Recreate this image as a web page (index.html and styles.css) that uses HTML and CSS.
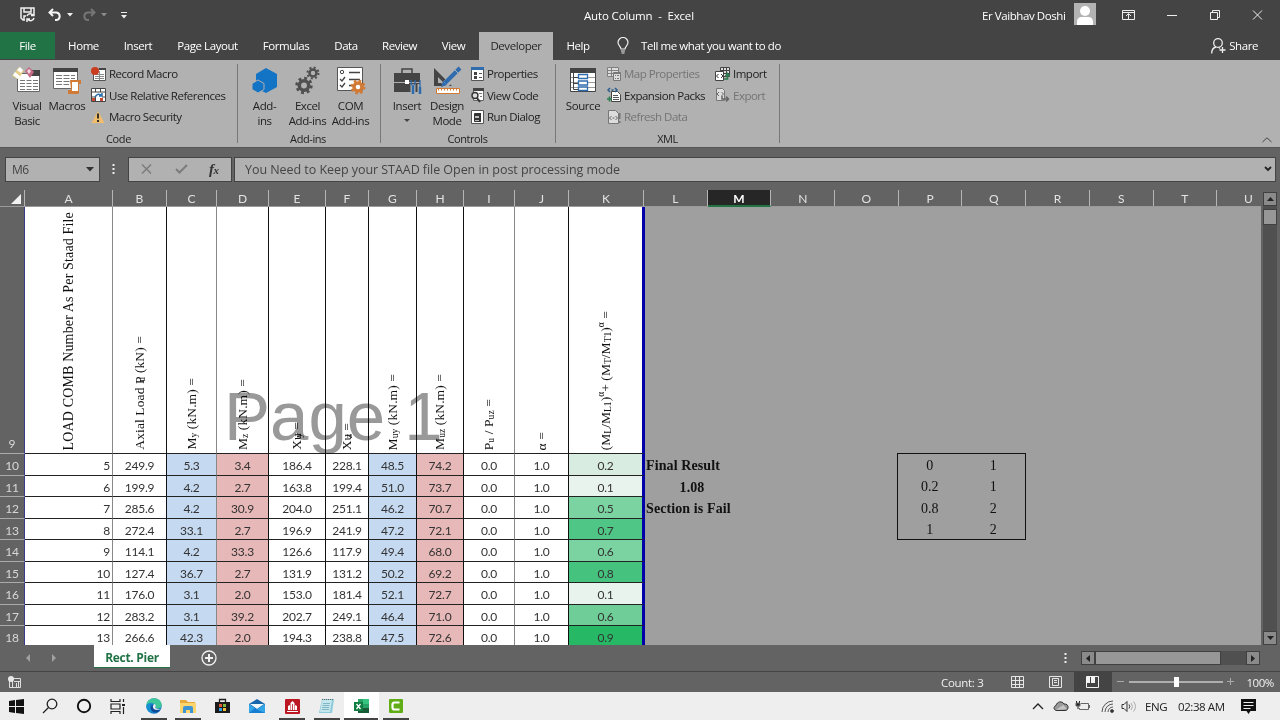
FILE: index.html
```html
<!DOCTYPE html>
<html lang="en">
<head>
  <meta charset="UTF-8">
  <meta name="viewport" content="width=device-width, initial-scale=1.0">
  <title>Auto Column - Excel</title>

  <link rel="stylesheet" href="styles.css">
</head>
<body>
  <div class="window">
    <header class="titlebar">
      <div class="quick">
        <svg class="q-save" width="16" height="16" viewBox="0 0 16 16" fill="none" stroke="#f0f0f0" stroke-width="1.500"><path d="M5 13H3L1 11V1h13v4M4 1v4h7V1M4 13V9h2"/><path d="M7 9a3.500 3.500 0 0 1 6-1M14 5v3.500h-3M14 11a3.500 3.500 0 0 1-6 1.500M7 15v-3h3"/></svg>
        <svg class="q-undo" width="14" height="14" viewBox="0 0 14 14" fill="none" stroke="#f4f4f4" stroke-width="2"><path d="M5 1L1.500 4.500 5 8M2 4.500h6.500a3.800 3.800 0 0 1 0 7.500H7"/></svg>
        <svg class="q-caret" width="6" height="4"><path d="M0 0h6L3 3.500z" fill="#eee"/></svg>
        <svg class="q-redo" width="14" height="14" viewBox="0 0 14 14" fill="none" stroke="#757575" stroke-width="2"><path d="M9 1l3.500 3.500L9 8M12 4.500H5.500a3.800 3.800 0 0 0 0 7.500H7"/></svg>
        <svg class="q-caret" width="6" height="4"><path d="M0 0h6L3 3.500z" fill="#8a8a8a"/></svg>
        <svg class="q-more" width="6" height="7"><path d="M0 .5h6" stroke="#eee"/><path d="M0 3h6L3 6.500z" fill="#eee"/></svg>
      </div>
      <div class="doc-title">Auto Column&nbsp; -&nbsp; Excel</div>
      <div class="user">Er Vaibhav Doshi</div>
      <svg class="avatar" width="22" height="22" viewBox="0 0 22 22"><path fill="#b3b3b3" d="M0 0h22v22H0z"/><circle cx="11" cy="8" r="5" fill="#fff"/><path d="M3 22v-3q0-5 5-5h6q5 0 5 5v3z" fill="#fff"/></svg>
      <svg class="win-btns" width="145" height="14" viewBox="0 0 145 14" fill="none" stroke="#eee"><path d="M.5 2.500h12v9H.5zM.5 4.500h12M6.500 11V6M4 8l2.500-2.500L9 8M45 7.500h10M88.500 4.500h7v7h-7zM90.500 4V2.500h7v7H96M131 2.500l9 9M140 2.500l-9 9"/></svg>
    </header>

    <nav class="tabs">
      <div class="tab file">File</div>
      <div class="tab">Home</div>
      <div class="tab">Insert</div>
      <div class="tab">Page Layout</div>
      <div class="tab">Formulas</div>
      <div class="tab">Data</div>
      <div class="tab">Review</div>
      <div class="tab">View</div>
      <div class="tab active">Developer</div>
      <div class="tab">Help</div>
      <div class="tell">
        <svg width="12" height="17" viewBox="0 0 12 17" fill="none" stroke="#eee" stroke-width="1.200"><path d="M4 12c0-2.500-3-3.500-3-6.500a5 5 0 0 1 10 0c0 3-3 4-3 6.500zM4 14h4M4.500 16h3"/></svg>
        <span>Tell me what you want to do</span>
      </div>
      <div class="share">
        <svg width="15" height="16" viewBox="0 0 15 16" fill="none" stroke="#eee" stroke-width="1.300"><circle cx="7" cy="5" r="4.300"/><path d="M.7 15.500c0-4 2-6 4.300-6.500M8 9.500l1 1M11.500 9v6M8.500 12h6"/></svg>
        <span>Share</span>
      </div>
    </nav>

    <section class="ribbon">
      <div class="group code">
        <div class="tools">
          <div class="big">
            <svg width="30" height="30" viewBox="0 0 30 30"><path fill="#fff" stroke="#666" d="M5.500 7.500h22v18h-22z"/><path fill="#444" d="M19 4h9v6h-9z"/><path stroke="#777" stroke-dasharray="5 1.500" d="M8 14.500h18M8 17.500h18M8 20.500h18M8 23.500h18"/><path fill="#e6cb86" d="M0 10l7-9 5 4-6 8z"/><path fill="#fff" d="M3 6l5 4-2 3-5-4zM5 4l3-3 3 3-2 3z"/><path fill="#c46a84" d="M13 5l4-4 5 5-4 6z"/><path fill="#f3dbe2" d="M15 5l2-2 2 2-2 3z"/></svg>
            <span>Visual<br>Basic</span>
          </div>
          <div class="big">
            <svg width="30" height="30" viewBox="0 0 30 30"><path fill="#fff" stroke="#666" d="M1.500 2.500h24v20h-24z"/><path fill="#444" d="M1 2h25v4H1z"/><path stroke="#777" stroke-dasharray="6 1.500" d="M4 9.500h19M4 12.500h19M4 15.500h19M4 18.500h13"/><path fill="#d17a35" d="M18 14h11v4h-2v9q0 1-2 1h-9v-4h3z"/><path fill="#fff" d="M20 16h6v9h-6z"/></svg>
            <span>Macros</span>
          </div>
          <div class="list">
            <div class="small"><svg width="16" height="16" viewBox="0 0 16 16"><path fill="#fff" stroke="#555" d="M2.500 3.500h12v11h-12z"/><path stroke="#444" stroke-width="2" d="M8 3h7"/><path stroke="#888" d="M4 8.500h9M4 10.500h9M4 12.500h9M8.500 5v9"/><circle cx="4" cy="5" r="4" fill="#c93c20"/></svg>Record Macro</div>
            <div class="small"><svg width="16" height="16" viewBox="0 0 16 16"><path fill="#fff" stroke="#444" d="M.5 1.500h14v13H.5zM.5 5h14M.5 10h4M11 10h4M4.500 1.500V5M9.500 1.500V5M4.500 10v4"/><path fill="none" stroke="#2c6fae" stroke-width="1.500" d="M4 10q3-5 7-1M11 6v3H8"/><path fill="#c64b32" d="M1 11h3v3H1zM9 11h3v3H9z"/></svg>Use Relative References</div>
            <div class="small"><svg width="16" height="16" viewBox="0 0 16 16"><path fill="#efbd6b" d="M7 2L.5 14h13z"/><path stroke="#222" stroke-width="1.800" d="M7 4.500v5M7 11v2"/></svg>Macro Security</div>
          </div>
        </div>
        <div class="caption">Code</div>
      </div>
      <div class="group addins">
        <div class="tools">
          <div class="big">
            <svg width="30" height="30" viewBox="0 0 30 30"><path fill="#1373c4" d="M16 2l11 6v13l-11 6-10-5V8z"/><path fill="#1373c4" stroke="#b1b1b1" d="M8 14l6 3.500v6L8 27l-6-3.500v-6z"/></svg>
            <span>Add-<br>ins</span>
          </div>
          <div class="big">
            <svg width="30" height="30" viewBox="0 0 30 30" fill="none" stroke="#505050"><circle cx="11" cy="19.500" r="4.700" stroke-width="3.500"/><circle cx="11" cy="19.500" r="7.200" stroke-width="3" stroke-dasharray="2.800 2.850"/><circle cx="20" cy="7" r="3.500" stroke-width="2.500"/><circle cx="20" cy="7" r="5.500" stroke-width="2" stroke-dasharray="2 2.320"/></svg>
            <span>Excel<br>Add-ins</span>
          </div>
          <div class="big">
            <svg width="30" height="30" viewBox="0 0 30 30"><path fill="#fff" stroke="#555" d="M1.500 1.500h25v23h-25z"/><path fill="none" stroke="#444" stroke-width="1.300" d="M4 13l2 2 3-4M4 19l2 2 3-4M13 6.500h11M13 13.500h11M13 19.500h4"/><circle cx="6" cy="6" r="1.700" fill="none" stroke="#444"/><g fill="none" stroke="#d17a35"><circle cx="22" cy="21" r="4" stroke-width="3.500"/><circle cx="22" cy="21" r="6.200" stroke-width="2.500" stroke-dasharray="2.400 2.470"/></g></svg>
            <span>COM<br>Add-ins</span>
          </div>
        </div>
        <div class="caption">Add-ins</div>
      </div>
      <div class="group controls">
        <div class="tools">
          <div class="big">
            <svg width="30" height="30" viewBox="0 0 30 30"><path fill="none" stroke="#444" stroke-width="1.500" d="M10 7V3h10v4"/><path fill="#444" d="M2 7h26v9H2zM2 17h26v9H2z"/><path fill="#fff" d="M13 14h4v4h-4z"/><path d="M21 28V18M28 28V18" stroke="#b1b1b1" stroke-width="5"/><path stroke="#2f6cad" stroke-width="2.500" fill="none" d="M21 28v-8M28 28v-7"/><path stroke="#2f6cad" stroke-width="1.300" fill="none" d="M19 14v4q2 3 4 0v-4M28 14v7"/></svg>
            <span>Insert</span>
            <svg class="drop" width="6" height="4"><path d="M0 0h6L3 3z" fill="#444"/></svg>
          </div>
          <div class="big">
            <svg width="30" height="30" viewBox="0 0 30 30"><path fill="#444" fill-rule="evenodd" d="M2 2l18 18H2zM6 11v6h6z"/><path stroke="#b1b1b1" stroke-width="7" d="M12 20L28 3"/><path stroke="#2f6cad" stroke-width="4" d="M13 17L28 2"/><path fill="#2f6cad" d="M9 21l2-6 4 4z"/><path stroke="#b1b1b1" d="M23 4l4 4"/><path fill="#fff" stroke="#d17a35" d="M4.500 22.500h23v5h-23z"/><path stroke="#d17a35" stroke-width="2" stroke-dasharray="1 2" d="M6 23.500h21"/></svg>
            <span>Design<br>Mode</span>
          </div>
          <div class="list">
            <div class="small"><svg width="14" height="16" viewBox="0 0 14 16"><path fill="#fff" stroke="#555" d="M.5 1.500h12v13H.5z"/><path fill="#2f6cad" d="M0 1h13v3H0z"/><path fill="#444" d="M3 6h3v3H3zM3 10h3v3H3z"/><path stroke="#555" d="M8 7.500h3M8 11.500h3"/></svg>Properties</div>
            <div class="small"><svg width="14" height="16" viewBox="0 0 14 16"><path fill="#fff" stroke="#666" d="M2.500 1.500h10v12h-10z"/><path fill="#444" d="M2 1h11v3H2z"/><path stroke="#777" d="M8 6.500h3M9 9.500h2"/><circle cx="4" cy="8.500" r="3" fill="#ddd" stroke="#333" stroke-width="1.400"/><path stroke="#333" stroke-width="2" d="M6 11l3 4"/></svg>View Code</div>
            <div class="small"><svg width="14" height="16" viewBox="0 0 14 16"><path fill="#fff" stroke="#555" d="M.5 1.500h12v13H.5z"/><path fill="#bbb" stroke="#333" d="M3.500 4.500h5v8h-5z"/><path stroke="#333" stroke-width="2" d="M4 6h4M4 10h4M9 4v9"/></svg>Run Dialog</div>
          </div>
        </div>
        <div class="caption">Controls</div>
      </div>
      <div class="group xml">
        <div class="tools">
          <div class="big">
            <svg width="30" height="30" viewBox="0 0 30 30"><path fill="#fff" stroke="#444" d="M2.500 3.500h25v22h-25z"/><path fill="#444" d="M2 2h26v5H2z"/><path stroke="#999" d="M3 11.500h24M3 16.500h24M3 21.500h24"/><path stroke="#444" fill="none" d="M5.500 7v16.500H10M5.500 11.500H10M5.500 17.500H10"/><path fill="#fff" stroke="#2f6cad" stroke-width="1.300" d="M10.500 8.500h9v4h-9zM10.500 15h9v4h-9zM10.500 21h9v3.500h-9z"/></svg>
            <span>Source</span>
          </div>
          <div class="list">
            <div class="small off"><svg width="15" height="16" viewBox="0 0 15 16"><path fill="#ddd" stroke="#808080" d="M.5 1.500h11v9H.5zM.5 4.500h11M.5 7.500h6M4.500 2v8"/><path fill="#ddd" stroke="#777" d="M6.500 6.500h7v8h-7z"/><path stroke="#777" d="M6 7.500h8M8 9.500h1M10 9.500h2M8 12.500h1M10 12.500h2"/></svg>Map Properties</div>
            <div class="small"><svg width="15" height="16" viewBox="0 0 15 16"><path fill="#fff" stroke="#444" d="M4.500 4.500h6l3 3v7h-9z"/><path stroke="#555" d="M6 8.500h5M6 10.500h6M6 12.500h6"/><path stroke="#2b5d8c" fill="none" stroke-width="1.500" d="M3 1L1 3l2 2M8 1l2 2-2 2M4.500 3h2"/><path stroke="#2c7d50" stroke-width="1.600" d="M0 12h5M2.500 9.500v5"/></svg>Expansion Packs</div>
            <div class="small off"><svg width="15" height="16" viewBox="0 0 15 16"><path fill="#ddd" stroke="#777" d="M1.500 1.500h7l3 3v10h-10z"/><path stroke="#666" fill="none" d="M4.500 7l-2 2 2 2M8.500 7l2 2-2 2M5.500 9h2"/><path stroke="#777" stroke-width="2" d="M12.500 4v6M12.500 12v2"/></svg>Refresh Data</div>
          </div>
          <div class="list second">
            <div class="small"><svg width="16" height="16" viewBox="0 0 16 16"><path fill="#ddd" stroke="#444" d="M5.500 1.500h9v9h-9zM5.500 4.500h9M5.500 7.500h9M8.500 1v8M11.500 1v8"/><path fill="#fff" stroke="#444" d="M.5 5.500h8v9h-8z"/><path stroke="#333" fill="none" d="M3.500 8l-2 2 2 2M6 8l2 2-2 2"/><path stroke="#2c7d50" stroke-width="1.600" fill="none" d="M9 13h3.500V8M10.500 10l2-2.500 2 2.500"/></svg>Import</div>
            <div class="small off"><svg width="16" height="16" viewBox="0 0 16 16"><path fill="#ddd" stroke="#777" d="M1.500 1.500h6l2 2v10h-8z"/><path stroke="#666" fill="none" d="M4 5L2 7l2 2M6.500 5l2 2-2 2"/><path stroke="#666" stroke-width="1.500" fill="none" d="M7 9v3h6M11 9.500l2.500 2.500-2.500 2.500"/></svg>Export</div>
          </div>
        </div>
        <div class="caption">XML</div>
      </div>
      <svg class="collapse" width="10" height="6"><path d="M.5 5L5 .8 9.500 5" fill="none" stroke="#444"/></svg>
    </section>

    <section class="formula">
      <div class="namebox"><span>M6</span><svg width="8" height="5"><path d="M0 0h8L4 4.500z" fill="#333"/></svg></div>
      <svg class="grip" width="3" height="12"><path d="M.5 1h2v2h-2zM.5 5h2v2h-2zM.5 9h2v2h-2z" fill="#eee"/></svg>
      <div class="fx">
        <svg width="11" height="10" viewBox="0 0 11 10"><path d="M1 .5l9 9M10 .5l-9 9" stroke="#7c7c7c" stroke-width="1.500"/></svg>
        <svg width="13" height="10" viewBox="0 0 13 10"><path d="M1 5l3.500 3.500L12 1" stroke="#7c7c7c" stroke-width="2" fill="none"/></svg>
        <i>f<small>x</small></i>
      </div>
      <div class="entry"><span>You Need to Keep your STAAD file Open in post processing mode</span><svg width="8" height="6"><path d="M1 1l3 3 3-3" fill="none" stroke="#222" stroke-width="1.800"/></svg></div>
    </section>

    <main class="sheet">
      <div class="grid-area">
        <div class="cols">
          <div class="corner"><svg width="10" height="10"><path d="M10 0v10H0z" fill="#f2f2f2"/></svg></div>
          <div>A</div><div>B</div><div>C</div><div>D</div><div>E</div><div>F</div><div>G</div><div>H</div><div>I</div><div>J</div><div>K</div>
          <div>L</div><div class="current">M</div><div>N</div><div>O</div><div>P</div><div>Q</div><div>R</div><div>S</div><div>T</div><div>U</div>
        </div>
        <div class="body">
          <div class="cells">
            <div class="row head">
              <b>9</b>
              <div><span class="load">LOAD COMB Number As Per Staad File</span></div>
              <div><span>Axial Load P<sub class="tight">u</sub> (kN) =</span></div>
              <div><span>M<sub>y</sub> (kN.m) =</span></div>
              <div><span>M<sub>z</sub> (kN.m) =</span></div>
              <div><span>Xu<sub class="tight">y</sub> =</span></div>
              <div><span>Xu<sub class="tight">z</sub> =</span></div>
              <div><span>M<sub>uy</sub> (kN.m) =</span></div>
              <div><span>M<sub>uz</sub> (kN.m) =</span></div>
              <div><span>P<sub>u</sub> / P<sub>uz</sub> =</span></div>
              <div><span>α =</span></div>
              <div><span class="ratio">(M<sub>L</sub>/M<sub>L1</sub>)<sup>α</sup>+ (M<sub>T</sub>/M<sub>T1</sub>)<sup>α</sup> =</span></div>
            </div>
            <div class="row"><b>10</b><div>5</div><div>249.9</div><div>5.3</div><div>3.4</div><div>186.4</div><div>228.1</div><div>48.5</div><div>74.2</div><div>0.0</div><div>1.0</div><div class="g1">0.2</div></div>
            <div class="row"><b>11</b><div>6</div><div>199.9</div><div>4.2</div><div>2.7</div><div>163.8</div><div>199.4</div><div>51.0</div><div>73.7</div><div>0.0</div><div>1.0</div><div class="g0">0.1</div></div>
            <div class="row"><b>12</b><div>7</div><div>285.6</div><div>4.2</div><div>30.9</div><div>204.0</div><div>251.1</div><div>46.2</div><div>70.7</div><div>0.0</div><div>1.0</div><div class="g2">0.5</div></div>
            <div class="row"><b>13</b><div>8</div><div>272.4</div><div>33.1</div><div>2.7</div><div>196.9</div><div>241.9</div><div>47.2</div><div>72.1</div><div>0.0</div><div>1.0</div><div class="g4">0.7</div></div>
            <div class="row"><b>14</b><div>9</div><div>114.1</div><div>4.2</div><div>33.3</div><div>126.6</div><div>117.9</div><div>49.4</div><div>68.0</div><div>0.0</div><div>1.0</div><div class="g2">0.6</div></div>
            <div class="row"><b>15</b><div>10</div><div>127.4</div><div>36.7</div><div>2.7</div><div>131.9</div><div>131.2</div><div>50.2</div><div>69.2</div><div>0.0</div><div>1.0</div><div class="g5">0.8</div></div>
            <div class="row"><b>16</b><div>11</div><div>176.0</div><div>3.1</div><div>2.0</div><div>153.0</div><div>181.4</div><div>52.1</div><div>72.7</div><div>0.0</div><div>1.0</div><div class="g0">0.1</div></div>
            <div class="row"><b>17</b><div>12</div><div>283.2</div><div>3.1</div><div>39.2</div><div>202.7</div><div>249.1</div><div>46.4</div><div>71.0</div><div>0.0</div><div>1.0</div><div class="g3">0.6</div></div>
            <div class="row"><b>18</b><div>13</div><div>266.6</div><div>42.3</div><div>2.0</div><div>194.3</div><div>238.8</div><div>47.5</div><div>72.6</div><div>0.0</div><div>1.0</div><div class="g6">0.9</div></div>
            <div class="watermark">Page 1</div>
          </div>
          <div class="result">
            <div>Final Result</div>
            <div class="value">1.08</div>
            <div>Section is Fail</div>
          </div>
          <div class="lookup">
            <div>0</div><div>1</div>
            <div>0.2</div><div>1</div>
            <div>0.8</div><div>2</div>
            <div>1</div><div>2</div>
          </div>
        </div>
      </div>
      <div class="vscroll">
        <div class="sbtn"><svg width="7" height="4"><path d="M0 4h7L3.500 0z" fill="#222"/></svg></div>
        <div class="vthumb"></div>
        <div class="sbtn last"><svg width="7" height="4"><path d="M0 0h7L3.500 4z" fill="#222"/></svg></div>
      </div>
    </main>

    <div class="sheet-tabs">
      <svg class="nav-arrows" width="30" height="8"><path d="M4 0v8L0 4zM26 0v8l4-4z" fill="#a0a0a0"/></svg>
      <div class="sheet-tab">Rect. Pier</div>
      <svg class="add" width="16" height="16" viewBox="0 0 16 16" fill="none" stroke="#f0f0f0"><circle cx="8" cy="8" r="7" stroke-width="1.300"/><path d="M8 4v8M4 8h8" stroke-width="2"/></svg>
      <svg class="grip" width="3" height="12"><path d="M.5 1h2v2h-2zM.5 5h2v2h-2zM.5 9h2v2h-2z" fill="#eee"/></svg>
      <div class="hscroll">
        <div class="sbtn"><svg width="4" height="7"><path d="M4 0v7L0 3.500z" fill="#222"/></svg></div>
        <div class="hthumb"></div>
        <div class="sbtn last"><svg width="4" height="7"><path d="M0 0v7l4-3.500z" fill="#222"/></svg></div>
      </div>
    </div>

    <footer class="status">
      <svg class="rec" width="13" height="12" viewBox="0 0 13 12"><path fill="none" stroke="#ddd" d="M1.500 4v7.500h11V2.500H6M4.500 5v6M8.500 7v4M10.500 5v6M6 5.500h6"/><circle cx="3" cy="3" r="3" fill="#e8e8e8"/></svg>
      <div class="count">Count: 3</div>
      <div class="view"><svg width="13" height="12" fill="none" stroke="#e6e6e6"><path d="M.5.5h12v11H.5zM4.500 0v12M8.500 0v12M0 4.500h13M0 8.500h13"/></svg></div>
      <div class="view"><svg width="13" height="12" fill="none" stroke="#e6e6e6"><path d="M.5.5h12v11H.5zM3.500 2.500h6v7h-6zM5 4.500h3M5 6.500h3"/></svg></div>
      <div class="view on"><svg width="13" height="12"><path d="M.5.5h12v11H.5z" fill="none" stroke="#f4f4f4"/><path d="M1 0h3v7H1zM5 0h4v7H5z" fill="#f4f4f4"/></svg></div>
      <svg class="zoom" width="118" height="12"><path d="M0 5.500h7M110 5.500h7M113.500 2v7" stroke="#aaa"/><path d="M12 6h94" stroke="#c8c8c8" stroke-width="1.500"/><path d="M57 1h5v10h-5z" fill="#fff"/></svg>
      <div class="percent">100%</div>
    </footer>

    <div class="taskbar">
      <div class="task sys"><svg width="15" height="15" viewBox="0 0 15 15"><path fill="#111" d="M0 2l6-1v6H0zM7 .9L15 0v7H7zM0 8h6v6l-6-1zM7 8h8v7l-8-1z"/></svg></div>
      <div class="task sys"><svg width="16" height="16" viewBox="0 0 16 16" fill="none" stroke="#222" stroke-width="1.300"><circle cx="10" cy="6" r="4.800"/><path d="M6.500 9.500L1 15"/></svg></div>
      <div class="task sys"><svg width="16" height="16" viewBox="0 0 16 16"><circle cx="8" cy="8" r="6.200" fill="none" stroke="#111" stroke-width="1.900"/></svg></div>
      <div class="task sys"><svg width="16" height="15" viewBox="0 0 16 15" fill="none" stroke="#222" stroke-width="1.200"><path d="M1 0v2.500h9V0M1 15v-2.500h9V15M1 5h9v5H1zM13.500 0v3M13.500 8v7"/><path d="M12 5h3v2h-3z" fill="#222" stroke="none"/></svg></div>
      <div class="task open edge"><svg width="16" height="16" viewBox="0 0 16 16"><circle cx="8" cy="8" r="7.700" fill="#1677c5"/><path d="M.5 7C1 2.500 4.500.3 8 .3c5 0 8 3.700 7.700 7.200-.4 3-3.700 3.700-6 2.500 1-3-1-4.500-3.500-4.500C3.500 5.500 1 6.500.5 8z" fill="#3fc79a"/><path d="M.4 8C1 5.500 4 4 6.500 5c-3 1-4 6 1 9.500C3 15 0 12 .4 8z" fill="#1590d0"/><path d="M7 7c-1 3 1 5 7 5-2 3-6 3-8 1-2-2-1.500-5 1-6z" fill="#114a94"/><path d="M8 6c2 0 2 2 1.300 4 2 1.500 4 1.200 5.700.4-1.500 1.500-5 2-7 .6C6.500 10 6.500 8 8 6z" fill="#eee"/></svg></div>
      <div class="task open"><svg width="16" height="15" viewBox="0 0 16 15"><path fill="#e8a93b" d="M0 1h6l2 2h7v4H0z"/><path fill="#fbd56d" d="M0 4h16v10H0z"/><path fill="#3d94d4" d="M3 14V9q0-2 2-2h6q2 0 2 2v5h-3v-3H6v3z"/></svg></div>
      <div class="task"><svg width="15" height="16" viewBox="0 0 15 16"><path d="M4.500 5V1.500h6V5" fill="none" stroke="#222" stroke-width="1.300"/><path fill="#1c1c1c" d="M0 4h15v11H0z"/><path fill="#e65b34" d="M4 6h3v3H4z"/><path fill="#7fba42" d="M8 6h3v3H8z"/><path fill="#2aa4e8" d="M4 10h3v3H4z"/><path fill="#f6bd35" d="M8 10h3v3H8z"/></svg></div>
      <div class="task"><svg width="16" height="15" viewBox="0 0 16 15"><path fill="#1665ad" d="M0 5l8-5 8 5v9H0z"/><path fill="#eef7fc" d="M1 5h14l-7 5z"/><path fill="#32a5e8" d="M0 5l8 5.500L16 5v9H0z"/><path fill="#167ed0" d="M0 14l6-5 2 1.500L16 14z"/></svg></div>
      <div class="task open"><svg width="15" height="15" viewBox="0 0 15 15"><rect width="15" height="15" rx="1" fill="#bc1824"/><path fill="#fff" d="M2 12h11v1H2zM3 7l2-1v5H3zM5.500 4L7.500 2l2 2v7h-4zM10 6l2 1v4h-2z"/><path stroke="#bc1824" stroke-width=".8" d="M7.500 5v6"/></svg></div>
      <div class="task open"><svg width="15" height="16" viewBox="0 0 15 16"><path fill="#8ccbd9" d="M3 1h12l-2 14H0z"/><path fill="#c4e6ec" d="M3 2h10l-2 12H1z"/><path stroke="#7fb7c5" d="M4 5.500h7M3.500 7.500h7M3 9.500h7M3 11.500h7"/><path stroke="#666" stroke-dasharray="1 1" d="M3 1.500h12"/></svg></div>
      <div class="task open active"><svg width="15" height="15" viewBox="0 0 15 15"><path fill="#27a366" d="M4 0h11v14H4z"/><path fill="#36c481" d="M9 0h6v5H9z"/><path fill="#185c37" d="M4 9h11v5H4z"/><path fill="#107c41" d="M0 3h9v9H0z"/><path d="M2.500 5l4 5M6.500 5l-4 5" stroke="#fff" stroke-width="1.300"/></svg></div>
      <div class="task open"><svg width="14" height="14" viewBox="0 0 14 14"><rect width="14" height="14" rx="1" fill="#61ad16"/><path d="M10.500 3.500h-5q-2 0-2 2v3q0 2 2 2h5" fill="none" stroke="#fff" stroke-width="2.200"/></svg></div>

      <div class="tray">
        <svg class="t-up" width="12" height="8"><path d="M1 7l5-5 5 5" fill="none" stroke="#222" stroke-width="1.300"/></svg>
        <svg class="t-cloud" width="16" height="12" viewBox="0 0 16 12"><path d="M4 10.500C.5 10.500 0 6.500 3 5.500 4 1.500 9 .5 11 4c3-.5 4.500 2 4 4-.3 1.700-1.500 2.500-3 2.500z" fill="#999" stroke="#333"/><path d="M3 10l7-5 4 4" fill="#c5c5c5"/></svg>
        <svg class="t-bat" width="16" height="12" viewBox="0 0 16 12" fill="none" stroke="#666"><path d="M6 3.500h7.500v6H4.500V8M14.500 5v3"/><path d="M1.500 1v2M4.500 1v2M3 6v3" stroke="#222"/><path d="M1 3h4v3H1z" fill="#222"/></svg>
        <svg class="t-wifi" width="13" height="13" viewBox="0 0 13 13" fill="none" stroke="#555"><path d="M1 12A11 11 0 0 1 12 1M4 12a8 8 0 0 1 8-8M7 12a5 5 0 0 1 5-5" /><circle cx="11" cy="11" r="1.500" fill="#222"/></svg>
        <svg class="t-vol" width="16" height="13" viewBox="0 0 16 13" fill="none" stroke="#333"><path d="M1 4.500h2l3-3v10l-3-3H1zM8 4.500q1.500 2 0 4"/><path d="M10 3q3 3.500 0 7M12.500 1.500q4 5 0 10" stroke="#aaa"/></svg>
        <span class="lang">ENG</span>
        <span class="clock">02:38 AM</span>
        <svg class="note" width="15" height="15" viewBox="0 0 15 15"><path fill="#111" d="M0 0h15v12H9.500L7.500 15l-2-3H0z"/><path stroke="#eee" d="M2.500 3.500h10M2.500 6.500h10M2.500 9.500h7"/></svg>
      </div>
    </div>
  </div>
</body>
</html>
```

FILE: styles.css
```css
* {
  box-sizing: border-box;
}

body {
  margin: 0;
  font-family: "Open Sans", "Noto Sans", sans-serif;
  font-size: 11.500px;
  letter-spacing: -.42px;
}

svg {
  display: block;
  flex: none;
}

.window {
  width: 1280px;
  height: 720px;
  overflow: hidden;
  display: flex;
  flex-direction: column;
  background: #636363;
  white-space: nowrap;
}

/* title bar */
.titlebar {
  height: 32px;
  background: #444;
  color: #fff;
  display: flex;
  align-items: center;
  padding-bottom: 2px;
}

.quick {
  width: 584px;
  display: flex;
  align-items: center;
  padding-left: 20px;
}

.q-undo {
  margin-left: 12px;
}

.q-caret {
  margin-left: 5px;
}

.q-redo {
  margin-left: 9px;
}

.q-more {
  margin-left: 14px;
}

.doc-title {
  width: 398px;
  letter-spacing: -.15px;
}

.user {
  width: 92px;
}

.avatar {
  margin-top: -2px;
}

.win-btns {
  margin-left: 26px;
}

/* ribbon tabs */
.tabs {
  height: 28px;
  background: #444;
  color: #fff;
  display: flex;
}

.tab {
  height: 28px;
  line-height: 27px;
  text-align: center;
  width: 50px;
}

.tab.file {
  width: 55px;
  height: 27px;
  background: #217346;
}

.tab:nth-child(2) { width: 57px; }
.tab:nth-child(3) { width: 52px; }
.tab:nth-child(4) { width: 87px; }
.tab:nth-child(5) { width: 70px; }
.tab:nth-child(7) { width: 57px; }
.tab:nth-child(8) { width: 51px; }

.tab.active {
  width: 74px;
  background: #b1b1b1;
  color: #262626;
}

.tell,
.share {
  display: flex;
  align-items: center;
  height: 27px;
}

.tell {
  margin-left: 14px;
  gap: 12px;
}

.share {
  margin-left: auto;
  padding-right: 22px;
  gap: 3px;
}

/* ribbon */
.ribbon {
  height: 87px;
  background: #b1b1b1;
  color: #222;
  display: flex;
  padding-top: 4px;
}

.group {
  height: 79px;
  border-right: 1px solid #777;
  display: flex;
  flex-direction: column;
}

.group.code { width: 238px; padding-left: 7px; }
.group.addins { width: 143px; padding-left: 5px; }
.group.controls { width: 175px; padding-left: 6px; }
.group.xml { width: 224px; padding-left: 7px; }

.tools {
  display: flex;
  flex: none;
  height: 66px;
}

.big {
  width: 40px;
  flex: none;
  text-align: center;
  line-height: 15px;
  display: flex;
  flex-direction: column;
  align-items: center;
  padding-top: 2px;
}

.big span {
  margin-top: 2px;
}

.addins .big {
  width: 43px;
}

.drop {
  margin-top: 6px;
}

.list {
  flex: none;
  margin-left: 4px;
  margin-top: -1px;
}

.xml .list {
  width: 104px;
}

.xml .list.second {
  width: 60px;
}

.small {
  height: 21.500px;
  display: flex;
  align-items: center;
  gap: 2px;
  letter-spacing: -.5px;
}

.off {
  color: #747474;
}

.caption {
  text-align: center;
  font-size: 11px;
  line-height: 17px;
  margin-left: -7px;
}

.collapse {
  margin: 73px 8px 0 auto;
}

/* formula bar */
.formula {
  height: 43px;
  border-top: 1px solid #555;
  display: flex;
  align-items: center;
  padding: 0 5px;
  color: #444;
}

.namebox,
.fx,
.entry {
  height: 25px;
  background: #b1b1b1;
  border: 1px solid #444;
  display: flex;
  align-items: center;
}

.namebox {
  width: 95px;
  justify-content: space-between;
  padding: 0 5px 0 6px;
  font-size: 12px;
}

.formula .grip {
  margin: 0 13px 0 12px;
}

.fx {
  width: 104px;
  padding-left: 12px;
}

.fx svg + svg {
  margin-left: 23px;
}

.fx i {
  margin-left: 21px;
  font: italic bold 15px "Liberation Serif", serif;
  color: #333;
}

.fx small {
  font-size: 11px;
}

.entry {
  flex: 1;
  margin-left: 2px;
  padding: 0 3px 0 10px;
  justify-content: space-between;
  font-size: 12.500px;
  letter-spacing: -.05px;
  margin-right: -1px;
}

/* worksheet */
.sheet {
  height: 455px;
  display: flex;
}

.grid-area {
  width: 1261px;
  overflow: hidden;
}

.cols,
.row {
  display: grid;
  grid-template-columns: 25px 88px 54px 50px 52px 57px 43px 48px 47px 51px 54px 76px;
  grid-template-rows: 100%;
}

.cols {
  grid-template-columns: 25px 88px 54px 50px 52px 57px 43px 48px 47px 51px 54px 75px repeat(10, 63.700px);
  height: 17px;
  font: 12px Lato, sans-serif;
  color: #e2e2e2;
  letter-spacing: 0;
  border-bottom: 1px solid #9a9a9a;
}

.cols div {
  text-align: center;
  line-height: 17px;
  border-right: 1px solid #b5b5b5;
}

.cols .corner {
  display: flex;
  justify-content: flex-end;
  align-items: flex-end;
  padding: 0 3px 2px 0;
}

.cols .current {
  height: 17px;
  background: #262626;
  color: #fff;
  font-weight: bold;
  border-bottom: 2px solid #217346;
}

.body {
  height: 438px;
  background: #9f9f9f;
  display: flex;
  align-items: flex-start;
  overflow: hidden;
}

.cells {
  width: 645px;
  position: relative;
  flex: none;
}

.row {
  height: 21.500px;
  width: 645px;
  font: 12px Lato, sans-serif;
  letter-spacing: -.2px;
  color: #333;
}

.row > * {
  border-right: 1px solid #111;
  border-bottom: 1px solid #222;
  background: #fff;
  text-align: center;
  line-height: 24px;
}

.row b {
  background: #636363;
  color: #d8d8d8;
  font-weight: normal;
  border-right-color: #3a3a8c;
  border-bottom-color: #aaa;
}

.row > :nth-child(2) {
  text-align: right;
  padding-right: 2px;
}

.row > :nth-child(2),
.row > :nth-child(4),
.row > :nth-child(10) {
  border-right-color: #888;
}

.row > :nth-child(4),
.row > :nth-child(8) {
  background: #c5d9f1;
}

.row > :nth-child(5),
.row > :nth-child(9) {
  background: #e6b8b7;
}

.row > :nth-child(12) {
  border-right: 3px solid #0000a8;
}

.row > .g0 { background: #e9f3ee; }
.row > .g1 { background: #d9ece1; }
.row > .g2 { background: #7ad3a0; }
.row > .g3 { background: #6fce98; }
.row > .g4 { background: #50c686; }
.row > .g5 { background: #46c27f; }
.row > .g6 { background: #27b866; }

.row.head {
  height: 247px;
}

.row.head > div {
  background: #fff;
  display: flex;
  align-items: flex-end;
  justify-content: center;
  padding: 0 0 3px;
}

.row.head b {
  display: flex;
  align-items: flex-end;
  justify-content: center;
  line-height: 18px;
}

.row.head span {
  writing-mode: vertical-rl;
  transform: rotate(180deg);
  font: 13.500px/16px "Liberation Serif", serif;
  letter-spacing: .1px;
  color: #111;
}

.row.head .load {
  font-size: 14px;
  letter-spacing: .15px;
}

.row.head .ratio {
  letter-spacing: .05px;
}

.row.head sub,
.row.head sup {
  font-size: 9.500px;
  line-height: 0;
}

.row.head sub {
  vertical-align: -2px;
}

.row.head .tight {
  margin-top: -5px;
}

.watermark {
  position: absolute;
  left: 224px;
  top: 170px;
  font: 69px/80px "Liberation Sans", Arial, sans-serif;
  letter-spacing: 0;
  color: #999;
  mix-blend-mode: multiply;
}

.result {
  width: 252px;
  padding: 248px 0 0 1px;
  font: bold 14px/21.500px "Liberation Serif", serif;
  letter-spacing: .1px;
  color: #111;
}

.result .value {
  width: 92px;
  text-align: center;
}

.lookup {
  margin-top: 246px;
  width: 129px;
  height: 87px;
  border: 1px solid #111;
  display: grid;
  grid-template-columns: 1fr 1fr;
  grid-auto-rows: 21.400px;
  font: 14px/23px "Liberation Serif", serif;
  letter-spacing: 0;
  text-align: center;
  color: #111;
}

/* scrollbars */
.vscroll {
  width: 14px;
  margin: 2px 0 0 2px;
  background: #505050;
  display: flex;
  flex-direction: column;
}

.sbtn {
  width: 14px;
  height: 14px;
  background: #8a8a8a;
  border: 1px solid #404040;
  display: flex;
  align-items: center;
  justify-content: center;
}

.sbtn.last {
  margin-top: auto;
}

.vthumb {
  height: 16px;
  margin-top: 3px;
  background: #979797;
  border: 1px solid #404040;
}

/* sheet tabs */
.sheet-tabs {
  height: 27px;
  border-bottom: 1px solid #444;
  display: flex;
  padding-left: 26px;
}

.nav-arrows {
  margin-top: 9px;
}

.sheet-tab {
  width: 76px;
  height: 23px;
  margin-left: 38px;
  background: #fff;
  border-bottom: 1px solid #217346;
  color: #217346;
  font-size: 12px;
  font-weight: bold;
  text-align: center;
  line-height: 25px;
  letter-spacing: -.3px;
}

.add {
  margin: 5px 0 0 31px;
}

.sheet-tabs .grip {
  margin: 7px 14px 0 auto;
}

.hscroll {
  width: 179px;
  height: 14px;
  margin: 6px 20px 0 0;
  background: #505050;
  display: flex;
}

.hscroll .sbtn.last {
  margin: 0 0 0 auto;
}

.hthumb {
  width: 126px;
  background: #979797;
  border: 1px solid #404040;
}

/* status bar */
.status {
  height: 20px;
  display: flex;
  align-items: center;
  color: #f0f0f0;
  padding-left: 8px;
  letter-spacing: -.3px;
}

.count {
  width: 58px;
  margin-left: 920px;
}

.view {
  width: 37.500px;
  height: 20px;
  display: flex;
  align-items: center;
  justify-content: center;
}

.view.on {
  background: #444;
}

.zoom {
  margin-left: 5px;
}

.percent {
  margin-left: 12px;
  letter-spacing: -.5px;
}

/* taskbar */
.taskbar {
  height: 28px;
  background: #eee;
  color: #222;
  display: flex;
}

.task {
  width: 34.600px;
  display: flex;
  align-items: center;
  justify-content: center;
  padding: 0 4px;
}

.task.sys {
  width: 33.600px;
}

.task.edge {
  margin-left: 2px;
}

.open {
  background: linear-gradient(#444, #444) center bottom / 26px 2px no-repeat;
}

.open.active {
  background: linear-gradient(#444, #444) center bottom / 34px 2px no-repeat #fff;
}

.tray {
  margin-left: auto;
  display: flex;
  align-items: center;
}

.t-cloud { margin-left: 9px; }
.t-bat { margin-left: 6px; }
.t-wifi { margin-left: 10px; }
.t-vol { margin-left: 7px; }

.lang {
  width: 21px;
  margin-left: 8px;
}

.clock {
  width: 46px;
  margin-left: 12px;
}

.note {
  margin: 0 24px 0 17px;
}
```
